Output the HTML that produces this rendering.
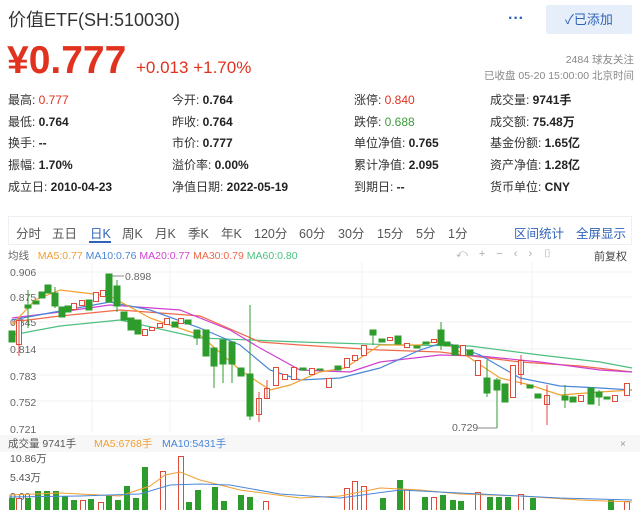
<!DOCTYPE html>
<html><head><meta charset="utf-8"><style>
*{margin:0;padding:0;box-sizing:border-box}
body{width:640px;height:510px;overflow:hidden;background:#fff;font-family:"Liberation Sans","Noto Sans CJK SC",sans-serif;color:#333;position:relative}
.a{position:absolute;white-space:nowrap}
.st{font-size:12px;color:#333}
.st b{font-weight:bold;color:#222}
.st b.r{color:#e0321e;font-weight:normal}.st b.g{color:#3a9c3a;font-weight:normal}
.r{color:#e0321e}
.tab{font-size:12.5px;color:#555;top:223px}
.gy{color:#888}
</style></head><body>
<div class="a" style="left:8px;top:6px;font-size:18px;color:#333">价值ETF(SH:510030)</div>
<div class="a" style="left:508px;top:10px;font-size:16px;color:#2f63b8;font-weight:bold">···</div>
<div class="a" style="left:546px;top:5px;width:86px;height:29px;background:#e6eef9;border-radius:2px;color:#2f63b8;font-size:13px;line-height:29px;text-align:center">✓已添加</div>
<div class="a r" style="left:7px;top:39px;font-size:39px;font-weight:bold">¥0.777</div>
<div class="a r" style="left:136px;top:58px;font-size:17px">+0.013 +1.70%</div>
<div class="a gy" style="right:6px;top:52px;font-size:10.5px">2484 球友关注</div>
<div class="a gy" style="right:6px;top:68px;font-size:10.5px">已收盘 05-20 15:00:00 北京时间</div>

<div class="a st" style="left:8px;top:91px">最高: <b class="r">0.777</b></div>
<div class="a st" style="left:8px;top:113px">最低: <b>0.764</b></div>
<div class="a st" style="left:8px;top:134px">换手: <b>--</b></div>
<div class="a st" style="left:8px;top:156px">振幅: <b>1.70%</b></div>
<div class="a st" style="left:8px;top:178px">成立日: <b>2010-04-23</b></div>
<div class="a st" style="left:172px;top:91px">今开: <b>0.764</b></div>
<div class="a st" style="left:172px;top:113px">昨收: <b>0.764</b></div>
<div class="a st" style="left:172px;top:134px">市价: <b>0.777</b></div>
<div class="a st" style="left:172px;top:156px">溢价率: <b>0.00%</b></div>
<div class="a st" style="left:172px;top:178px">净值日期: <b>2022-05-19</b></div>
<div class="a st" style="left:354px;top:91px">涨停: <b class="r">0.840</b></div>
<div class="a st" style="left:354px;top:113px">跌停: <b class="g">0.688</b></div>
<div class="a st" style="left:354px;top:134px">单位净值: <b>0.765</b></div>
<div class="a st" style="left:354px;top:156px">累计净值: <b>2.095</b></div>
<div class="a st" style="left:354px;top:178px">到期日: <b>--</b></div>
<div class="a st" style="left:490px;top:91px">成交量: <b>9741手</b></div>
<div class="a st" style="left:490px;top:113px">成交额: <b>75.48万</b></div>
<div class="a st" style="left:490px;top:134px">基金份额: <b>1.65亿</b></div>
<div class="a st" style="left:490px;top:156px">资产净值: <b>1.28亿</b></div>
<div class="a st" style="left:490px;top:178px">货币单位: <b>CNY</b></div>

<div class="a" style="left:8px;top:216px;width:624px;height:29px;border:1px solid #eceff3"></div>
<div class="a tab" style="left:16px">分时</div>
<div class="a tab" style="left:52px">五日</div>
<div class="a tab" style="left:90px;color:#2f63b8">日K</div>
<div class="a" style="left:89px;top:241px;width:22px;height:2px;background:#2f63b8"></div>
<div class="a tab" style="left:122px">周K</div>
<div class="a tab" style="left:155px">月K</div>
<div class="a tab" style="left:188px">季K</div>
<div class="a tab" style="left:221px">年K</div>
<div class="a tab" style="left:254px">120分</div>
<div class="a tab" style="left:299px">60分</div>
<div class="a tab" style="left:338px">30分</div>
<div class="a tab" style="left:377px">15分</div>
<div class="a tab" style="left:416px">5分</div>
<div class="a tab" style="left:448px">1分</div>
<div class="a tab" style="left:514px;color:#2f63b8">区间统计</div>
<div class="a tab" style="left:576px;color:#2f63b8">全屏显示</div>

<div class="a" style="left:8px;top:248px;font-size:10.5px"><span style="color:#666">均线</span>&nbsp;&nbsp;&nbsp;<span style="color:#f0a030">MA5:0.77</span> <span style="color:#4a86d8">MA10:0.76</span> <span style="color:#d040d0">MA20:0.77</span> <span style="color:#f06a4a">MA30:0.79</span> <span style="color:#4cc080">MA60:0.80</span></div>
<div class="a" style="left:456px;top:248px;font-size:11px;color:#aaa;word-spacing:8px">⤺ + − ‹ › ▯</div>
<div class="a" style="left:594px;top:248px;font-size:11px;color:#444">前复权</div>

<svg class="a" style="left:0;top:0" width="640" height="510">
<g stroke="#f2f2f2" stroke-width="1">
<line x1="8" y1="272" x2="632" y2="272"/><line x1="8" y1="297" x2="632" y2="297"/><line x1="8" y1="322" x2="632" y2="322"/><line x1="8" y1="349" x2="632" y2="349"/><line x1="8" y1="375" x2="632" y2="375"/><line x1="8" y1="401" x2="632" y2="401"/>
<line x1="92" y1="262" x2="92" y2="432"/><line x1="170" y1="262" x2="170" y2="432"/><line x1="362" y1="262" x2="362" y2="432"/><line x1="532" y1="262" x2="532" y2="432"/>
</g>
<g font-size="10.5" fill="#666" font-family="Liberation Sans">
<text x="10" y="276">0.906</text><text x="10" y="301">0.875</text><text x="10" y="326">0.845</text><text x="10" y="353">0.814</text><text x="10" y="380">0.783</text><text x="10" y="406">0.752</text><text x="10" y="433">0.721</text>
<text x="125" y="280">0.898</text><text x="452" y="431">0.729</text>
</g>
<polyline points="110,276 124,276" stroke="#888" fill="none"/>
<polyline points="478,428 497,428" stroke="#888" fill="none"/>
<polyline fill="none" stroke="#4cc080" stroke-width="1.2" points="12,335 60,326 120,320 200,338 300,342 400,345 470,346 540,355 600,362 632,368"/>
<polyline fill="none" stroke="#f06a4a" stroke-width="1.2" points="12,322 60,316 120,310 200,316 260,342 300,345 380,350 440,352 520,362 580,366 632,372"/>
<polyline fill="none" stroke="#d040d0" stroke-width="1.2" points="12,318 60,312 110,305 180,310 230,330 260,348 300,370 350,372 380,362 440,355 480,356 540,362 600,370 632,372"/>
<polyline fill="none" stroke="#4a86d8" stroke-width="1.2" points="12,320 60,311 110,302 150,310 200,328 240,345 270,370 300,380 340,378 380,368 420,350 445,342 480,355 520,378 560,386 600,388 632,390"/>
<polyline fill="none" stroke="#f0a030" stroke-width="1.2" points="12,325 35,300 60,290 110,296 150,318 170,325 200,335 240,370 270,390 290,385 320,372 345,368 380,345 420,345 440,340 470,358 500,378 530,385 560,395 600,392 632,390"/>
<g stroke-width="1">
<g fill="#2d9c2d" stroke="#2d9c2d">
<rect x="9" y="331" width="6" height="11"/><rect x="25" y="305" width="6" height="3"/><line x1="28" y1="290" x2="28" y2="328"/>
<rect x="33" y="301" width="6" height="3"/><rect x="39" y="292" width="6" height="6"/><rect x="45" y="285" width="6" height="8"/>
<rect x="52" y="293" width="6" height="13"/><line x1="55" y1="287" x2="55" y2="308"/><rect x="59" y="307" width="6" height="10"/><rect x="65" y="306" width="6" height="6"/>
<rect x="86" y="300" width="6" height="10"/><rect x="106" y="274" width="6" height="28"/><rect x="114" y="286" width="6" height="20"/><line x1="117" y1="280" x2="117" y2="312"/>
<rect x="121" y="312" width="6" height="8"/><rect x="128" y="318" width="6" height="12"/><rect x="135" y="320" width="6" height="14"/>
<rect x="172" y="322" width="6" height="5"/><rect x="185" y="320" width="6" height="4"/><rect x="194" y="330" width="6" height="8"/><line x1="197" y1="330" x2="197" y2="345"/>
<rect x="203" y="330" width="6" height="26"/><rect x="211" y="348" width="6" height="18"/><line x1="214" y1="348" x2="214" y2="388"/>
<rect x="220" y="340" width="6" height="24"/><line x1="223" y1="340" x2="223" y2="383"/><rect x="229" y="342" width="6" height="22"/><line x1="232" y1="342" x2="232" y2="383"/>
<rect x="238" y="368" width="6" height="8"/><rect x="247" y="374" width="6" height="42"/><line x1="250" y1="305" x2="250" y2="420"/>
<rect x="300" y="368" width="6" height="2"/><rect x="317" y="369" width="6" height="1"/><rect x="335" y="366" width="6" height="4"/>
<rect x="370" y="330" width="6" height="5"/><line x1="373" y1="330" x2="373" y2="345"/><rect x="379" y="339" width="6" height="3"/><rect x="395" y="336" width="6" height="8"/><rect x="414" y="346" width="6" height="2"/><rect x="423" y="342" width="6" height="2"/>
<rect x="438" y="330" width="6" height="15"/><line x1="441" y1="322" x2="441" y2="350"/><rect x="444" y="342" width="6" height="4"/><rect x="452" y="345" width="6" height="10"/><rect x="467" y="350" width="6" height="5"/>
<rect x="484" y="378" width="6" height="15"/><line x1="487" y1="360" x2="487" y2="397"/><rect x="494" y="380" width="6" height="10"/><line x1="497" y1="378" x2="497" y2="428"/>
<rect x="502" y="384" width="6" height="18"/><rect x="527" y="385" width="6" height="3"/><rect x="535" y="394" width="6" height="4"/><rect x="562" y="396" width="6" height="4"/><line x1="565" y1="385" x2="565" y2="408"/>
<rect x="570" y="397" width="6" height="5"/><rect x="588" y="388" width="6" height="16"/><rect x="596" y="392" width="6" height="5"/><line x1="599" y1="390" x2="599" y2="406"/><rect x="604" y="397" width="6" height="2"/>
</g>
<g fill="#fff" stroke="#e04a3a">
<rect x="16.5" y="320.5" width="5" height="24"/><line x1="19" y1="318" x2="19" y2="356"/><rect x="71.5" y="303.5" width="5" height="6"/><rect x="79.5" y="300.5" width="5" height="5"/>
<rect x="93.5" y="292.5" width="5" height="9"/><rect x="100.5" y="290.5" width="5" height="6"/><rect x="142.5" y="329.5" width="5" height="6"/><rect x="149.5" y="327.5" width="5" height="3"/>
<rect x="157.5" y="323.5" width="5" height="4"/><rect x="164.5" y="318.5" width="5" height="6"/><rect x="178.5" y="318.5" width="5" height="5"/>
<rect x="256.5" y="398.5" width="5" height="16"/><line x1="259" y1="392" x2="259" y2="422"/><rect x="264.5" y="388.5" width="5" height="10"/><line x1="267" y1="380" x2="267" y2="398"/>
<rect x="273.5" y="367.5" width="5" height="18"/><rect x="282.5" y="374.5" width="5" height="5"/><rect x="291.5" y="367.5" width="5" height="12"/><rect x="309.5" y="368.5" width="5" height="6"/>
<rect x="326.5" y="378.5" width="5" height="9"/><rect x="344.5" y="358.5" width="5" height="9"/><rect x="352.5" y="355.5" width="5" height="5"/><rect x="361.5" y="345.5" width="5" height="10"/>
<rect x="387.5" y="337.5" width="5" height="3"/><rect x="404.5" y="343.5" width="5" height="4"/><rect x="431.5" y="339.5" width="5" height="3"/><rect x="460.5" y="345.5" width="5" height="10"/>
<rect x="475.5" y="360.5" width="5" height="15"/><rect x="510.5" y="365.5" width="5" height="32"/><rect x="518.5" y="360.5" width="5" height="14"/><line x1="521" y1="355" x2="521" y2="385"/>
<rect x="544.5" y="395.5" width="5" height="9"/><line x1="547" y1="385" x2="547" y2="425"/><rect x="578.5" y="395.5" width="5" height="6"/><rect x="612.5" y="395.5" width="5" height="6"/><rect x="624.5" y="383.5" width="5" height="12"/>
</g>
</g>
<rect x="0" y="435" width="640" height="17" fill="#f7f7f7"/>
<text x="8" y="447" font-size="10.5" fill="#555">成交量 9741手</text>
<text x="94" y="447" font-size="10.5" fill="#f0a030">MA5:6768手</text>
<text x="162" y="447" font-size="10.5" fill="#4a86d8">MA10:5431手</text>
<text x="620" y="447" font-size="10" fill="#999">×</text>
<g font-size="10.5" fill="#555"><text x="10" y="462">10.86万</text><text x="10" y="481">5.43万</text><text x="10" y="500">0.00</text></g>
<g fill="#2d9c2d">
<rect x="9" y="498" width="6" height="12"/><rect x="25" y="498" width="6" height="12"/><rect x="35" y="491" width="6" height="19"/><rect x="44" y="491" width="6" height="19"/><rect x="53" y="491" width="6" height="19"/><rect x="62" y="496" width="6" height="14"/><rect x="71" y="500" width="6" height="10"/><rect x="88" y="499" width="6" height="11"/><rect x="106" y="495" width="6" height="15"/><rect x="115" y="500" width="6" height="10"/><rect x="124" y="486" width="6" height="24"/><rect x="133" y="498" width="6" height="12"/><rect x="142" y="467" width="6" height="43"/><rect x="186" y="502" width="6" height="8"/><rect x="195" y="490" width="6" height="20"/><rect x="212" y="487" width="6" height="23"/><rect x="221" y="501" width="6" height="9"/><rect x="238" y="495" width="6" height="15"/><rect x="247" y="497" width="6" height="13"/><rect x="380" y="498" width="6" height="12"/><rect x="397" y="480" width="6" height="30"/><rect x="422" y="497" width="6" height="13"/><rect x="440" y="495" width="6" height="15"/><rect x="450" y="500" width="6" height="10"/><rect x="458" y="501" width="6" height="9"/><rect x="487" y="497" width="6" height="13"/><rect x="496" y="497" width="6" height="13"/><rect x="505" y="497" width="6" height="13"/><rect x="530" y="498" width="6" height="12"/><rect x="608" y="500" width="6" height="10"/>
</g>
<g fill="#fff" stroke="#e04a3a">
<rect x="16.5" y="498.5" width="5" height="12"/><rect x="80.5" y="500.5" width="5" height="10"/><rect x="98.5" y="502.5" width="5" height="8"/><rect x="160.5" y="471.5" width="5" height="39"/><rect x="178.5" y="456.5" width="5" height="54"/><rect x="263.5" y="501.5" width="5" height="9"/><rect x="344.5" y="488.5" width="5" height="22"/><rect x="352.5" y="481.5" width="5" height="29"/><rect x="361.5" y="486.5" width="5" height="24"/><rect x="404.5" y="489.5" width="5" height="21"/><rect x="431.5" y="497.5" width="5" height="13"/><rect x="475.5" y="492.5" width="5" height="18"/><rect x="518.5" y="494.5" width="5" height="16"/><rect x="624.5" y="501.5" width="5" height="9"/>
</g>
<polyline fill="none" stroke="#f0a030" points="9,495 60,493 120,496 150,486 165,475 180,472 200,480 240,490 300,498 340,496 380,488 420,490 460,494 520,496 580,500 632,502"/>
<polyline fill="none" stroke="#4a86d8" points="9,497 80,496 140,494 170,485 200,484 230,485 280,494 340,498 400,490 440,492 500,495 560,498 632,500"/>
</svg>
</body></html>
